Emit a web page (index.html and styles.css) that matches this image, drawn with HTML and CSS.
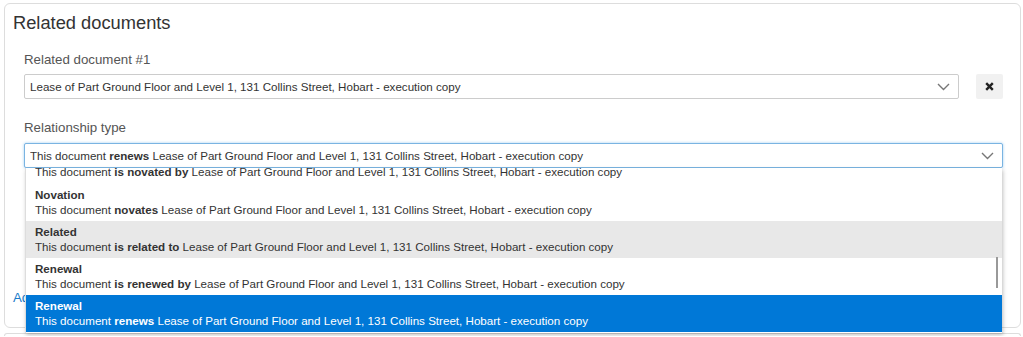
FILE: index.html
```html
<!DOCTYPE html>
<html lang="en">
<head>
  <meta charset="UTF-8" />
  <meta name="viewport" content="width=device-width, initial-scale=1.0"/>
  <title>Related documents</title>
  <link rel="stylesheet" href="styles.css">
</head>
<body>

  <div class="card">
    <h3 class="card-title">Related documents</h3>

    <div class="card-body">
      <div class="form-group">
        <label class="field-label">Related document #1</label>
        <div class="field-row">
          <div class="select">
            <span class="select-text">Lease of Part Ground Floor and Level 1, 131 Collins Street, Hobart - execution copy</span>
            <svg class="chevron" width="13" height="8" viewBox="0 0 13 8"><path d="M1 1l5.5 5.5L12 1" fill="none" stroke="#777" stroke-width="1.4"/></svg>
          </div>
          <button class="remove-btn" type="button" aria-label="Remove">
            <svg width="9" height="9" viewBox="0 0 9 9"><path d="M1.2 1.2l6.6 6.6M7.8 1.2L1.2 7.8" stroke="#222" stroke-width="2.4"/></svg>
          </button>
        </div>
      </div>

      <div class="form-group">
        <label class="field-label">Relationship type</label>
        <div class="select-wrap">
          <div class="select focused">
            <span class="select-text">This document <b>renews</b> Lease of Part Ground Floor and Level 1, 131 Collins Street, Hobart - execution copy</span>
            <svg class="chevron" width="13" height="8" viewBox="0 0 13 8"><path d="M1 1l5.5 5.5L12 1" fill="none" stroke="#777" stroke-width="1.4"/></svg>
          </div>

          <div class="dropdown">
            <ul class="options">
              <li class="option">
                <strong>Novation</strong>
                <span>This document <b>is novated by</b> Lease of Part Ground Floor and Level 1, 131 Collins Street, Hobart - execution copy</span>
              </li>
              <li class="option">
                <strong>Novation</strong>
                <span>This document <b>novates</b> Lease of Part Ground Floor and Level 1, 131 Collins Street, Hobart - execution copy</span>
              </li>
              <li class="option hover">
                <strong>Related</strong>
                <span>This document <b>is related to</b> Lease of Part Ground Floor and Level 1, 131 Collins Street, Hobart - execution copy</span>
              </li>
              <li class="option">
                <strong>Renewal</strong>
                <span>This document <b>is renewed by</b> Lease of Part Ground Floor and Level 1, 131 Collins Street, Hobart - execution copy</span>
              </li>
              <li class="option selected">
                <strong>Renewal</strong>
                <span>This document <b>renews</b> Lease of Part Ground Floor and Level 1, 131 Collins Street, Hobart - execution copy</span>
              </li>
            </ul>
            <div class="scroll-thumb"></div>
          </div>
        </div>
      </div>
    </div>

    <a href="#" class="add-link">Add another related document</a>
  </div>

  <div class="card card-next"></div>

</body>
</html>
```

FILE: styles.css
```css
* {
  margin: 0;
  padding: 0;
  box-sizing: border-box;
  font-family: 'Liberation Sans', Arial, sans-serif;
}

body {
  background: #fff;
  color: #333;
  padding: 3px 2px 0 4px;
}

.card {
  border: 1px solid #ddd;
  border-radius: 6px;
  padding-bottom: 21px;
}

.card-next {
  margin-top: 5px;
  height: 3px;
  padding: 0;
  border-bottom: none;
  border-radius: 6px 6px 0 0;
}

.card-title {
  font-size: 18.3px;
  font-weight: normal;
  line-height: 24px;
  color: #333;
  padding: 7px 8px 0;
}

.card-body {
  padding: 17px 17px 0 19px;
}

.form-group {
  margin-bottom: 21px;
}

.field-label {
  display: block;
  font-size: 13.3px;
  line-height: 16px;
  color: #555;
  margin-bottom: 6px;
}

.form-group + .form-group .field-label {
  margin-bottom: 7px;
}

.field-row {
  display: flex;
  gap: 17px;
}

.select {
  flex: 1;
  height: 25px;
  border: 1px solid #ccc;
  border-radius: 2px;
  background: #fff;
  display: flex;
  align-items: center;
  padding: 0 8px 0 5px;
  font-size: 11.6px;
  color: #333;
}

.select-text {
  flex: 1;
  white-space: nowrap;
  overflow: hidden;
}

.select.focused {
  border-color: #7ab4e2;
  box-shadow: 0 0 3px rgba(102, 175, 233, 0.6);
}

.chevron {
  flex: none;
}

.remove-btn {
  width: 27px;
  height: 25px;
  border: none;
  border-radius: 2px;
  background: #f1f1f1;
  display: flex;
  align-items: center;
  justify-content: center;
  cursor: pointer;
}

.select-wrap {
  position: relative;
}

.dropdown {
  position: absolute;
  top: 25px;
  left: 1px;
  right: 1px;
  height: 165px;
  overflow: hidden;
  background: #fff;
  border-left: 1px solid #ddd;
  box-shadow: 1px 2px 4px rgba(0, 0, 0, 0.25);
  z-index: 5;
}

.options {
  list-style: none;
  margin-top: -22px;
}

.option {
  height: 37px;
  padding: 3px 9px 0;
  font-size: 11.6px;
  line-height: 15px;
  color: #333;
}

.option:first-child {
  height: 38px;
}

.option strong,
.option span {
  display: block;
  white-space: nowrap;
}

.option.hover {
  background: #e8e8e8;
}

.option.selected {
  background: #0078d7;
  color: #fff;
}

.scroll-thumb {
  position: absolute;
  right: 4px;
  top: 89px;
  width: 2px;
  height: 31px;
  background: #999;
}

.add-link {
  display: block;
  margin: 122px 0 0 8px;
  font-size: 13.3px;
  line-height: 16px;
  color: #1a7bc9;
  text-decoration: none;
}
```
